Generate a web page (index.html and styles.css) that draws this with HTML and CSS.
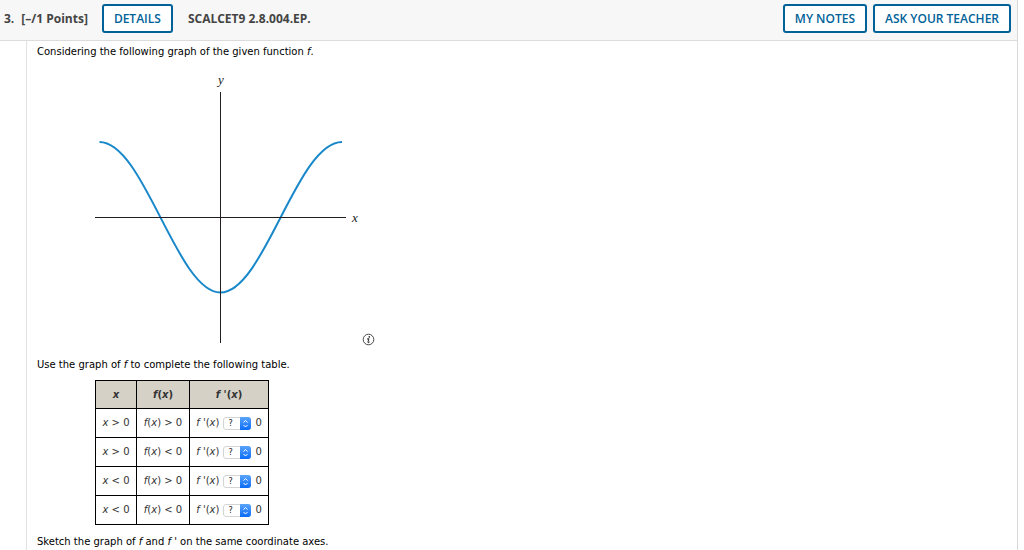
FILE: index.html
```html
<!DOCTYPE html>
<html lang="en">
<head>
  <meta charset="UTF-8">
  <meta name="viewport" content="width=device-width, initial-scale=1.0">
  <title>SCALCET9 2.8.004.EP.</title>
  <link rel="stylesheet" href="styles.css">
</head>
<body>

  <div class="question">

    <header class="question-header">
      <span class="number">3.</span>
      <span class="points">[–/1 Points]</span>
      <button class="btn" type="button">DETAILS</button>
      <span class="question-name">SCALCET9 2.8.004.EP.</span>
      <div class="actions">
        <button class="btn" type="button">MY NOTES</button>
        <button class="btn" type="button">ASK YOUR TEACHER</button>
      </div>
    </header>

    <main class="question-body">
      <p>Considering the following graph of the given function <i>f</i>.</p>

      <div class="graph">
        <svg width="275" height="275" viewBox="0 0 275 275" role="img" aria-label="Graph of f">
          <path class="curve" d="M12.5 71 C57 71 90 221.5 133.5 221.5 C177 221.5 210 71 255 71"/>
          <path class="axis" d="M8 146.5 H259 M133.5 21 V272"/>
          <text x="131" y="13">y</text>
          <text x="265" y="151">x</text>
        </svg>
        <a href="#" class="info" aria-label="Image description">
          <svg width="13" height="13" viewBox="0 0 13 13">
            <circle cx="6.5" cy="6.5" r="5.3" fill="none" stroke="#333" stroke-width="0.9"/>
            <circle cx="7.3" cy="3.9" r="0.8" fill="#222"/>
            <path d="M5 6.1 L6.9 5.7 L5.9 9.3 Q5.9 10.2 7.7 8.9" fill="none" stroke="#222" stroke-width="1"/>
          </svg>
        </a>
      </div>

      <p>Use the graph of <i>f</i> to complete the following table.</p>

      <table class="signs">
        <thead>
          <tr>
            <th class="col-x"><i>x</i></th>
            <th class="col-f"><i>f</i>(<i>x</i>)</th>
            <th class="col-d"><i>f '</i>(<i>x</i>)</th>
          </tr>
        </thead>
        <tbody>
          <tr>
            <td><i>x</i> &gt; 0</td>
            <td><i>f</i>(<i>x</i>) &gt; 0</td>
            <td>
              <div class="answer">
                <label for="sign1"><i>f '</i>(<i>x</i>)</label>
                <span class="pick">
                  <select id="sign1"><option>?</option><option>&gt;</option><option>&lt;</option></select>
                  <svg class="arrows" viewBox="0 0 11 13"><path d="M3.5 5.5 L5.5 3.5 L7.5 5.5 M3.5 8 L5.5 10 L7.5 8"/></svg>
                </span>
                <span>0</span>
              </div>
            </td>
          </tr>
          <tr>
            <td><i>x</i> &gt; 0</td>
            <td><i>f</i>(<i>x</i>) &lt; 0</td>
            <td>
              <div class="answer">
                <label for="sign2"><i>f '</i>(<i>x</i>)</label>
                <span class="pick">
                  <select id="sign2"><option>?</option><option>&gt;</option><option>&lt;</option></select>
                  <svg class="arrows" viewBox="0 0 11 13"><path d="M3.5 5.5 L5.5 3.5 L7.5 5.5 M3.5 8 L5.5 10 L7.5 8"/></svg>
                </span>
                <span>0</span>
              </div>
            </td>
          </tr>
          <tr>
            <td><i>x</i> &lt; 0</td>
            <td><i>f</i>(<i>x</i>) &gt; 0</td>
            <td>
              <div class="answer">
                <label for="sign3"><i>f '</i>(<i>x</i>)</label>
                <span class="pick">
                  <select id="sign3"><option>?</option><option>&gt;</option><option>&lt;</option></select>
                  <svg class="arrows" viewBox="0 0 11 13"><path d="M3.5 5.5 L5.5 3.5 L7.5 5.5 M3.5 8 L5.5 10 L7.5 8"/></svg>
                </span>
                <span>0</span>
              </div>
            </td>
          </tr>
          <tr>
            <td><i>x</i> &lt; 0</td>
            <td><i>f</i>(<i>x</i>) &lt; 0</td>
            <td>
              <div class="answer">
                <label for="sign4"><i>f '</i>(<i>x</i>)</label>
                <span class="pick">
                  <select id="sign4"><option>?</option><option>&gt;</option><option>&lt;</option></select>
                  <svg class="arrows" viewBox="0 0 11 13"><path d="M3.5 5.5 L5.5 3.5 L7.5 5.5 M3.5 8 L5.5 10 L7.5 8"/></svg>
                </span>
                <span>0</span>
              </div>
            </td>
          </tr>
        </tbody>
      </table>

      <p>Sketch the graph of <i>f</i> and <i>f '</i> on the same coordinate axes.</p>
    </main>

  </div>

</body>
</html>
```
FILE: styles.css
```css
* {
  margin: 0;
  padding: 0;
  box-sizing: border-box;
}

body {
  background: #fff;
  color: #000;
  font-family: Verdana, "DejaVu Sans", sans-serif;
  font-size: 10px;
  line-height: 14px;
}

.question {
  display: flex;
  flex-direction: column;
  min-height: 100vh;
  margin-right: 6px;
  border-right: 1px solid #d8d8d8;
}

.question-header {
  display: flex;
  align-items: center;
  padding: 4px 6px 7px 4px;
  background: #f7f7f7;
  border-bottom: 1px solid #dcdcdc;
  color: #444;
  font-family: "Open Sans", sans-serif;
  font-size: 12px;
  font-weight: 700;
}

.points {
  margin: 0 14px 0 7px;
}

.question-name {
  margin-left: 15px;
}

.actions {
  display: flex;
  gap: 6px;
  margin-left: auto;
}

.btn {
  height: 29px;
  padding: 0 10px;
  background: #fff;
  border: 2px solid #006298;
  border-radius: 3px;
  color: #006298;
  font-family: "Open Sans", sans-serif;
  font-size: 12px;
  font-weight: 600;
  cursor: pointer;
}

.question-body {
  flex: 1;
  margin-left: 26px;
  padding: 4px 10px 0;
  border-left: 1px solid #e2e2e2;
}

.graph {
  display: flex;
  align-items: flex-end;
  margin: 12px 0 12px 50px;
}

.graph text {
  fill: #222;
  font-family: "Liberation Serif", serif;
  font-size: 13px;
  font-style: italic;
}

.axis {
  fill: none;
  stroke: #231f20;
  stroke-width: 1;
}

.curve {
  fill: none;
  stroke: #1888ca;
  stroke-width: 2;
}

.info svg,
.graph svg {
  display: block;
}

.signs {
  margin: 8px 0 10px 58px;
  border-collapse: collapse;
  color: #333;
}

.signs th,
.signs td {
  height: 29px;
  border: 1px solid #000;
  text-align: center;
  white-space: nowrap;
}

.signs th {
  height: 28px;
  background: #d5d1c7;
}

.col-x {
  width: 41px;
}

.col-f {
  width: 53px;
}

.col-d {
  width: 79px;
}

.answer {
  display: flex;
  align-items: center;
  justify-content: center;
  gap: 4px;
}

.pick {
  display: flex;
  position: relative;
}

.pick select {
  width: 28px;
  height: 13px;
  padding-left: 4px;
  appearance: none;
  background: #fff;
  border: 1px solid #d4d4d4;
  border-radius: 3px;
  color: #222;
  font-family: Verdana, "DejaVu Sans", sans-serif;
  font-size: 8px;
}

.arrows {
  position: absolute;
  top: 0;
  right: 0;
  width: 11px;
  height: 13px;
  background: linear-gradient(#5aa5fb, #0a6cf8);
  border-radius: 0 3px 3px 0;
  pointer-events: none;
}

.arrows path {
  fill: none;
  stroke: #fff;
  stroke-width: 1;
}
```
